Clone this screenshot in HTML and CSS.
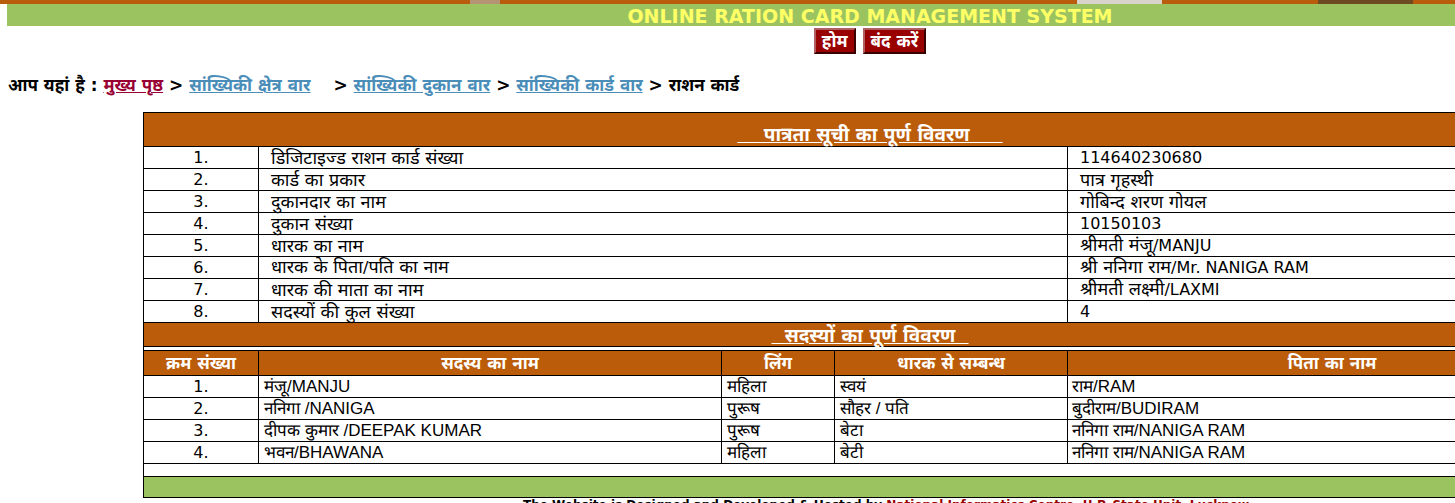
FILE: index.html
```html
<!DOCTYPE html>
<html lang="hi">
<head>
<meta charset="utf-8">
<title>Online Ration Card Management System</title>
<link rel="stylesheet" href="styles.css">
</head>
<body>
<div class="topstrip"><span class="blob blob-a"></span><span class="blob blob-b"></span><span class="blob blob-c"></span></div>
<div class="page">
  <div class="banner">ONLINE RATION CARD MANAGEMENT SYSTEM</div>
  <div class="buttons">
    <a class="btn" href="#">होम</a>
    <a class="btn" href="#">बंद करें</a>
  </div>
  <div class="crumbs">
    <span class="here">आप यहां है :</span>
    <a class="home-link" href="#">मुख्य पृष्ठ</a> &gt;
    <a class="crumb-link" href="#">सांख्यिकी क्षेत्र वार</a><span class="gap"></span> &gt;
    <a class="crumb-link" href="#">सांख्यिकी दुकान वार</a> &gt;
    <a class="crumb-link" href="#">सांख्यिकी कार्ड वार</a> &gt; राशन कार्ड
  </div>

  <table class="card">
    <colgroup>
      <col class="c1"><col class="c2"><col class="c3"><col class="c4"><col class="c5">
    </colgroup>
    <tr class="title-row"><td colspan="5"><span class="title">&nbsp;&nbsp;&nbsp;&nbsp;पात्रता सूची का पूर्ण विवरण&nbsp;&nbsp;&nbsp;&nbsp;&nbsp;</span></td></tr>
    <tr class="info"><td class="num"><span class="en">1.</span></td><td colspan="3">डिजिटाइज्ड राशन कार्ड संख्या</td><td><span class="en">114640230680</span></td></tr>
    <tr class="info"><td class="num"><span class="en">2.</span></td><td colspan="3">कार्ड का प्रकार</td><td>पात्र गृहस्थी</td></tr>
    <tr class="info"><td class="num"><span class="en">3.</span></td><td colspan="3">दुकानदार का नाम</td><td>गोबिन्द शरण गोयल</td></tr>
    <tr class="info"><td class="num"><span class="en">4.</span></td><td colspan="3">दुकान संख्या</td><td><span class="en">10150103</span></td></tr>
    <tr class="info"><td class="num"><span class="en">5.</span></td><td colspan="3">धारक का नाम</td><td>श्रीमती मंजू<span class="en">/MANJU</span></td></tr>
    <tr class="info"><td class="num"><span class="en">6.</span></td><td colspan="3">धारक के पिता<span class="en">/</span>पति का नाम</td><td>श्री ननिगा राम<span class="en">/Mr. NANIGA RAM</span></td></tr>
    <tr class="info"><td class="num"><span class="en">7.</span></td><td colspan="3">धारक की माता का नाम</td><td>श्रीमती लक्ष्मी<span class="en">/LAXMI</span></td></tr>
    <tr class="info"><td class="num"><span class="en">8.</span></td><td colspan="3">सदस्यों की कुल संख्या</td><td><span class="en">4</span></td></tr>
    <tr class="sub-row"><td colspan="5"><span class="title">&nbsp;&nbsp;सदस्यों का पूर्ण विवरण&nbsp;&nbsp;</span></td></tr>
    <tr class="spacer"><td colspan="5"></td></tr>
    <tr class="head"><th>क्रम संख्या</th><th>सदस्य का नाम</th><th>लिंग</th><th>धारक से सम्बन्ध</th><th>पिता का नाम</th></tr>
    <tr class="member"><td class="num"><span class="en">1.</span></td><td>मंजू/MANJU</td><td>महिला</td><td>स्वयं</td><td>राम/RAM</td></tr>
    <tr class="member"><td class="num"><span class="en">2.</span></td><td>ननिगा /NANIGA</td><td>पुरूष</td><td>सौहर / पति</td><td>बुदीराम/BUDIRAM</td></tr>
    <tr class="member"><td class="num"><span class="en">3.</span></td><td>दीपक कुमार /DEEPAK KUMAR</td><td>पुरूष</td><td>बेटा</td><td>ननिगा राम/NANIGA RAM</td></tr>
    <tr class="member"><td class="num"><span class="en">4.</span></td><td>भवन/BHAWANA</td><td>महिला</td><td>बेटी</td><td>ननिगा राम/NANIGA RAM</td></tr>
    <tr class="empty"><td colspan="5"></td></tr>
    <tr class="green-row"><td colspan="5"></td></tr>
  </table>
  <div class="footer">The Website is Designed and Developed &amp; Hosted by <span class="nic">National Informatics Centre, U.P. State Unit, Lucknow</span></div>
</div>
</body>
</html>
```

FILE: styles.css
```css
html { overflow: hidden; }
body {
  margin: 0;
  background: #ffffff;
  font-family: "DejaVu Sans", "Noto Sans", sans-serif;
  color: #000;
}
.topstrip {
  height: 4px;
  background: #b95c0c;
  position: relative;
  width: 1455px;
}
.blob { position: absolute; top: 0; height: 4px; }
.blob-a { left: 470px; width: 30px; background: #b49474; }
.blob-b { left: 1077px; width: 85px; background: #d8d4cc; }
.blob-c { left: 1318px; width: 95px; background: #6e4a22; }
.page {
  width: 1726px;
  margin-left: 7px;
}
.banner {
  height: 22px;
  background: #9bc461;
  color: #ffff66;
  font-family: "DejaVu Sans", Verdana, sans-serif;
  font-weight: bold;
  font-size: 19px;
  line-height: 25px;
  text-align: center;
  overflow: hidden;
}
.buttons {
  display: flex;
  justify-content: center;
  gap: 7px;
  padding-top: 2px;
  height: 26px;
}
.btn {
  display: block;
  background: #990000;
  color: #fff;
  text-decoration: none;
  font-weight: bold;
  font-size: 17px;
  line-height: 22px;
  padding: 0 6px;
  border: 2px solid;
  border-color: #b06060 #3a0000 #3a0000 #b06060;
}
.crumbs {
  margin-top: 19px;
  padding-left: 1px;
  font-size: 17px;
  font-weight: bold;
  line-height: 24px;
  height: 24px;
  white-space: nowrap;
}
.home-link { color: #990033; }
.crumb-link { color: #4a8db8; }
.gap { display: inline-block; width: 17px; }
.card {
  width: 1454px;
  margin: 15px auto 0;
  border-collapse: collapse;
  font-size: 18px;
  border-top: 1px solid #000;
  border-left: 1px solid #000;
}
.c1 { width: 115px; }
.c2 { width: 463px; }
.c3 { width: 113px; }
.c4 { width: 233px; }
.card td, .card th {
  border: 1px solid #000;
  padding: 0 12px;
  height: 21px;
  line-height: 20px;
  white-space: nowrap;
}
.en { font-family: "DejaVu Sans", sans-serif; font-size: 16px; }
.card td.num { text-align: center; }
.title-row td, .sub-row td {
  background: #bb5c0a;
  text-align: center;
  color: #fff;
  font-weight: bold;
  font-size: 19px;
}
.title-row td { height: 32px; line-height: 22px; vertical-align: bottom; padding-bottom: 1px; }
.sub-row td { height: 23px; line-height: 22px; }
.title { text-decoration: underline; }
.spacer td { height: 3px; padding: 0; border-left: none; border-right: none; }
.head th {
  background: #bb5c0a;
  color: #fff;
  font-size: 17px;
  font-weight: bold;
  text-align: center;
  height: 24px;
}
.member td { font-family: "Liberation Sans", sans-serif; font-size: 17px; padding: 0 5px; }
.member td:last-child { padding-left: 4px; }
.empty td { height: 12px; padding: 0; }
.green-row td { background: #9bc461; height: 20px; padding: 0; }
.footer {
  font-size: 12px;
  font-weight: bold;
  margin-top: 0;
  padding-left: 516px;
  white-space: nowrap;
  line-height: 14px;
}
.nic { color: #990000; }
```
